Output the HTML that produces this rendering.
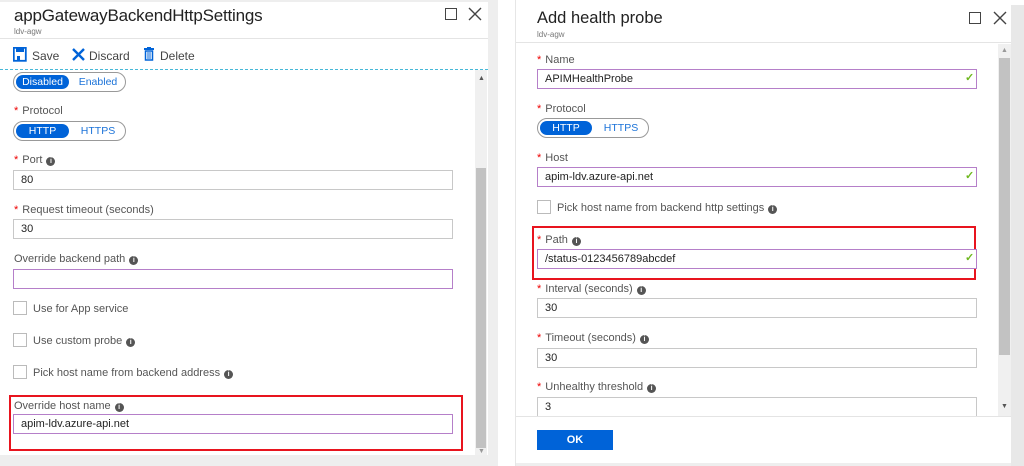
<!DOCTYPE html>
<html><head><meta charset="utf-8"><style>
*{margin:0;padding:0;box-sizing:border-box}
body{width:1024px;height:466px;background:#fff;position:relative;overflow:hidden;font-family:"Liberation Sans",sans-serif;color:#333}
.a{position:absolute}
.lbl{position:absolute;font-size:11px;color:#555;white-space:nowrap;line-height:13px}
.lbl b{color:#e00;font-weight:normal;margin-right:4px}
.inp{position:absolute;height:20px;border:1px solid #c8c8c8;font-size:11px;line-height:18px;padding-left:7px;color:#222;background:#fff}
.pu{border-color:#b57fc9}
.i{display:inline-block;width:9px;height:9px;border-radius:50%;background:#555;color:#fff;font-size:7px;line-height:9px;text-align:center;font-weight:bold;margin-left:4px;vertical-align:0px}
.tog{position:absolute;height:20px;border:1px solid #999;border-radius:10px;font-size:10.5px;line-height:18px}
.tog .on{position:absolute;left:2px;top:2px;height:14px;background:#0063d8;color:#fff;border-radius:7px;line-height:14px;text-align:center}
.tog .off{position:absolute;top:0;color:#1a72d8;text-align:center}
.cb{position:absolute;width:14px;height:14px;border:1px solid #bbb;background:#fff}
.chk{position:absolute;color:#6fb81f;font-size:11px;font-weight:bold}
</style></head><body>
<!-- left panel -->
<div class="a" style="left:488px;top:0;width:10px;height:466px;background:#eee"></div>
<div class="a" style="left:0;top:455px;width:498px;height:11px;background:#eee"></div>
<div class="a" style="left:0;top:0;width:488px;height:2px;background:#eee"></div>
<div class="a" style="left:14px;top:6px;font-size:17px;color:#222;letter-spacing:-0.2px">appGatewayBackendHttpSettings</div>
<div class="a" style="left:14px;top:27px;font-size:8px;color:#777">ldv-agw</div>
<div class="a" style="left:445px;top:8px;width:12px;height:12px;border:1.5px solid #444"></div>
<svg class="a" style="left:468px;top:7px" width="14" height="14"><path d="M1 1L13 13M13 1L1 13" stroke="#444" stroke-width="1.4"/></svg>
<div class="a" style="left:0;top:38px;width:488px;height:1px;background:#e4e4e4"></div>
<svg class="a" style="left:13px;top:47px" width="14" height="15"><rect x="0.8" y="0.8" width="12" height="13" fill="none" stroke="#0063d8" stroke-width="1.8"/><rect x="3" y="1" width="8" height="4" fill="#0063d8"/><rect x="4" y="9" width="3" height="4" fill="#0063d8"/></svg>
<div class="a" style="left:32px;top:49px;font-size:12px;color:#444">Save</div>
<svg class="a" style="left:72px;top:48px" width="13" height="13"><path d="M1 1L12 12M12 1L1 12" stroke="#0063d8" stroke-width="2.4"/></svg>
<div class="a" style="left:89px;top:49px;font-size:12px;color:#444">Discard</div>
<svg class="a" style="left:144px;top:47px" width="10" height="14"><rect x="0" y="1" width="10" height="2" fill="#0063d8"/><rect x="3" y="0" width="4" height="2" fill="#0063d8"/><path d="M1.5 4h7v9h-7z" fill="none" stroke="#0063d8" stroke-width="1.5"/><path d="M4 5v7M6 5v7" stroke="#0063d8"/></svg>
<div class="a" style="left:160px;top:49px;font-size:12px;color:#444">Delete</div>
<div class="a" style="left:0;top:69px;width:488px;border-top:1px dashed #46b8d8"></div>
<div class="a" style="left:475px;top:70px;width:12px;height:385px;background:#f0f0f0"></div>
<div class="a" style="left:476px;top:168px;width:10px;height:280px;background:#c2c2c2"></div>
<div class="a" style="left:478px;top:75px;font-size:7px;color:#555">▲</div>
<div class="a" style="left:478px;top:448px;font-size:7px;color:#999">▼</div>
<div class="tog" style="left:13px;top:72px;width:113px"><div class="on" style="width:53px">Disabled</div><div class="off" style="left:58px;width:52px">Enabled</div></div>
<div class="lbl" style="left:14px;top:105px"><b>*</b>Protocol</div>
<div class="tog" style="left:13px;top:121px;width:113px"><div class="on" style="width:53px">HTTP</div><div class="off" style="left:58px;width:52px">HTTPS</div></div>
<div class="lbl" style="left:14px;top:154px"><b>*</b>Port<span class="i">i</span></div>
<div class="inp" style="left:13px;top:170px;width:440px">80</div>
<div class="lbl" style="left:14px;top:204px"><b>*</b>Request timeout (seconds)</div>
<div class="inp" style="left:13px;top:219px;width:440px">30</div>
<div class="lbl" style="left:14px;top:253px">Override backend path<span class="i">i</span></div>
<div class="inp pu" style="left:13px;top:269px;width:440px"></div>
<div class="cb" style="left:13px;top:301px"></div><div class="lbl" style="left:33px;top:303px">Use for App service</div>
<div class="cb" style="left:13px;top:333px"></div><div class="lbl" style="left:33px;top:335px">Use custom probe<span class="i">i</span></div>
<div class="cb" style="left:13px;top:365px"></div><div class="lbl" style="left:33px;top:367px">Pick host name from backend address<span class="i">i</span></div>
<div class="a" style="left:9px;top:395px;width:454px;height:56px;border:2px solid #e8141e"></div>
<div class="lbl" style="left:14px;top:400px">Override host name<span class="i">i</span></div>
<div class="inp pu" style="left:13px;top:414px;width:440px">apim-ldv.azure-api.net</div>

<!-- right panel -->
<div class="a" style="left:515px;top:0;width:1px;height:466px;background:#e6e6e6"></div>
<div class="a" style="left:1011px;top:5px;width:13px;height:461px;background:#e8e8e8"></div>
<div class="a" style="left:516px;top:463px;width:495px;height:3px;background:#eee"></div>
<div class="a" style="left:537px;top:9px;font-size:16.5px;color:#222">Add health probe</div>
<div class="a" style="left:537px;top:30px;font-size:8px;color:#777">ldv-agw</div>
<div class="a" style="left:969px;top:12px;width:12px;height:12px;border:1.5px solid #444"></div>
<svg class="a" style="left:993px;top:11px" width="14" height="14"><path d="M1 1L13 13M13 1L1 13" stroke="#444" stroke-width="1.4"/></svg>
<div class="a" style="left:516px;top:42px;width:495px;height:1px;background:#e4e4e4"></div>
<div class="a" style="left:998px;top:44px;width:13px;height:372px;background:#f0f0f0"></div>
<div class="a" style="left:999px;top:58px;width:11px;height:297px;background:#c2c2c2"></div>
<div class="a" style="left:1001px;top:47px;font-size:7px;color:#999">▲</div>
<div class="a" style="left:1001px;top:403px;font-size:7px;color:#555">▼</div>
<div class="lbl" style="left:537px;top:54px"><b>*</b>Name</div>
<div class="inp pu" style="left:537px;top:69px;width:440px">APIMHealthProbe</div><div class="chk" style="left:965px;top:71px">✓</div>
<div class="lbl" style="left:537px;top:103px"><b>*</b>Protocol</div>
<div class="tog" style="left:537px;top:118px;width:112px"><div class="on" style="width:52px">HTTP</div><div class="off" style="left:57px;width:52px">HTTPS</div></div>
<div class="lbl" style="left:537px;top:152px"><b>*</b>Host</div>
<div class="inp pu" style="left:537px;top:167px;width:440px">apim-ldv.azure-api.net</div><div class="chk" style="left:965px;top:169px">✓</div>
<div class="cb" style="left:537px;top:200px"></div><div class="lbl" style="left:557px;top:202px">Pick host name from backend http settings<span class="i">i</span></div>
<div class="a" style="left:532px;top:226px;width:444px;height:54px;border:2px solid #e8141e"></div>
<div class="lbl" style="left:537px;top:234px"><b>*</b>Path<span class="i">i</span></div>
<div class="inp pu" style="left:537px;top:249px;width:440px">/status-0123456789abcdef</div><div class="chk" style="left:965px;top:251px">✓</div>
<div class="lbl" style="left:537px;top:283px"><b>*</b>Interval (seconds)<span class="i">i</span></div>
<div class="inp" style="left:537px;top:298px;width:440px">30</div>
<div class="lbl" style="left:537px;top:332px"><b>*</b>Timeout (seconds)<span class="i">i</span></div>
<div class="inp" style="left:537px;top:348px;width:440px">30</div>
<div class="lbl" style="left:537px;top:381px"><b>*</b>Unhealthy threshold<span class="i">i</span></div>
<div class="inp" style="left:537px;top:397px;width:440px;height:19px;border-bottom:none">3</div>
<div class="a" style="left:516px;top:416px;width:495px;height:1px;background:#e4e4e4"></div>
<div class="a" style="left:537px;top:430px;width:76px;height:20px;background:#0063d8;color:#fff;font-size:11px;font-weight:bold;text-align:center;line-height:20px">OK</div>
</body></html>
